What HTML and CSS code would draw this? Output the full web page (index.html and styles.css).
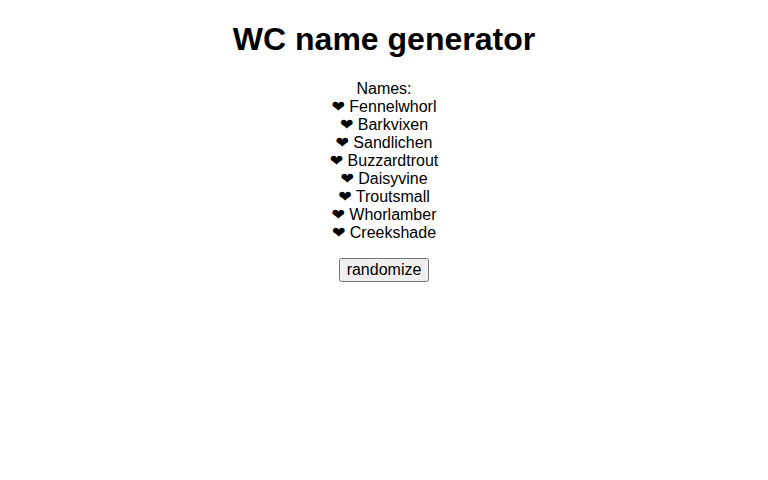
FILE: index.html
```html
<!DOCTYPE html>
<html lang="en">
  <head>
    <meta charset="UTF-8" />
    <meta name="viewport" content="width=device-width, initial-scale=1.0" />
    <title>WC name generator</title>
    <link rel="stylesheet" href="styles.css">
  </head>
  <body>
    <h1>WC name generator</h1>
    <p class="names">
      Names:<br>
      <span class="name">❤ Fennelwhorl</span><br>
      <span class="name">❤ Barkvixen</span><br>
      <span class="name">❤ Sandlichen</span><br>
      <span class="name">❤ Buzzardtrout</span><br>
      <span class="name">❤ Daisyvine</span><br>
      <span class="name">❤ Troutsmall</span><br>
      <span class="name">❤ Whorlamber</span><br>
      <span class="name">❤ Creekshade</span>
    </p>
    <button class="randomize">randomize</button>
  </body>
</html>
```

FILE: styles.css
```css
body {
  font-family: "Liberation Sans", Arial, "DejaVu Sans", sans-serif;
  text-align: center;
  color: #000;
  background-color: #fff;
}
h1 {
  font-size: 32px;
  margin-top: 13px;
  margin-bottom: 22px;
}
.names {
  line-height: 18px;
  margin-top: 0;
}
.randomize {
  font-family: "Liberation Sans", Arial, sans-serif;
  font-size: 16px;
  padding: 1px 6px;
}
```
